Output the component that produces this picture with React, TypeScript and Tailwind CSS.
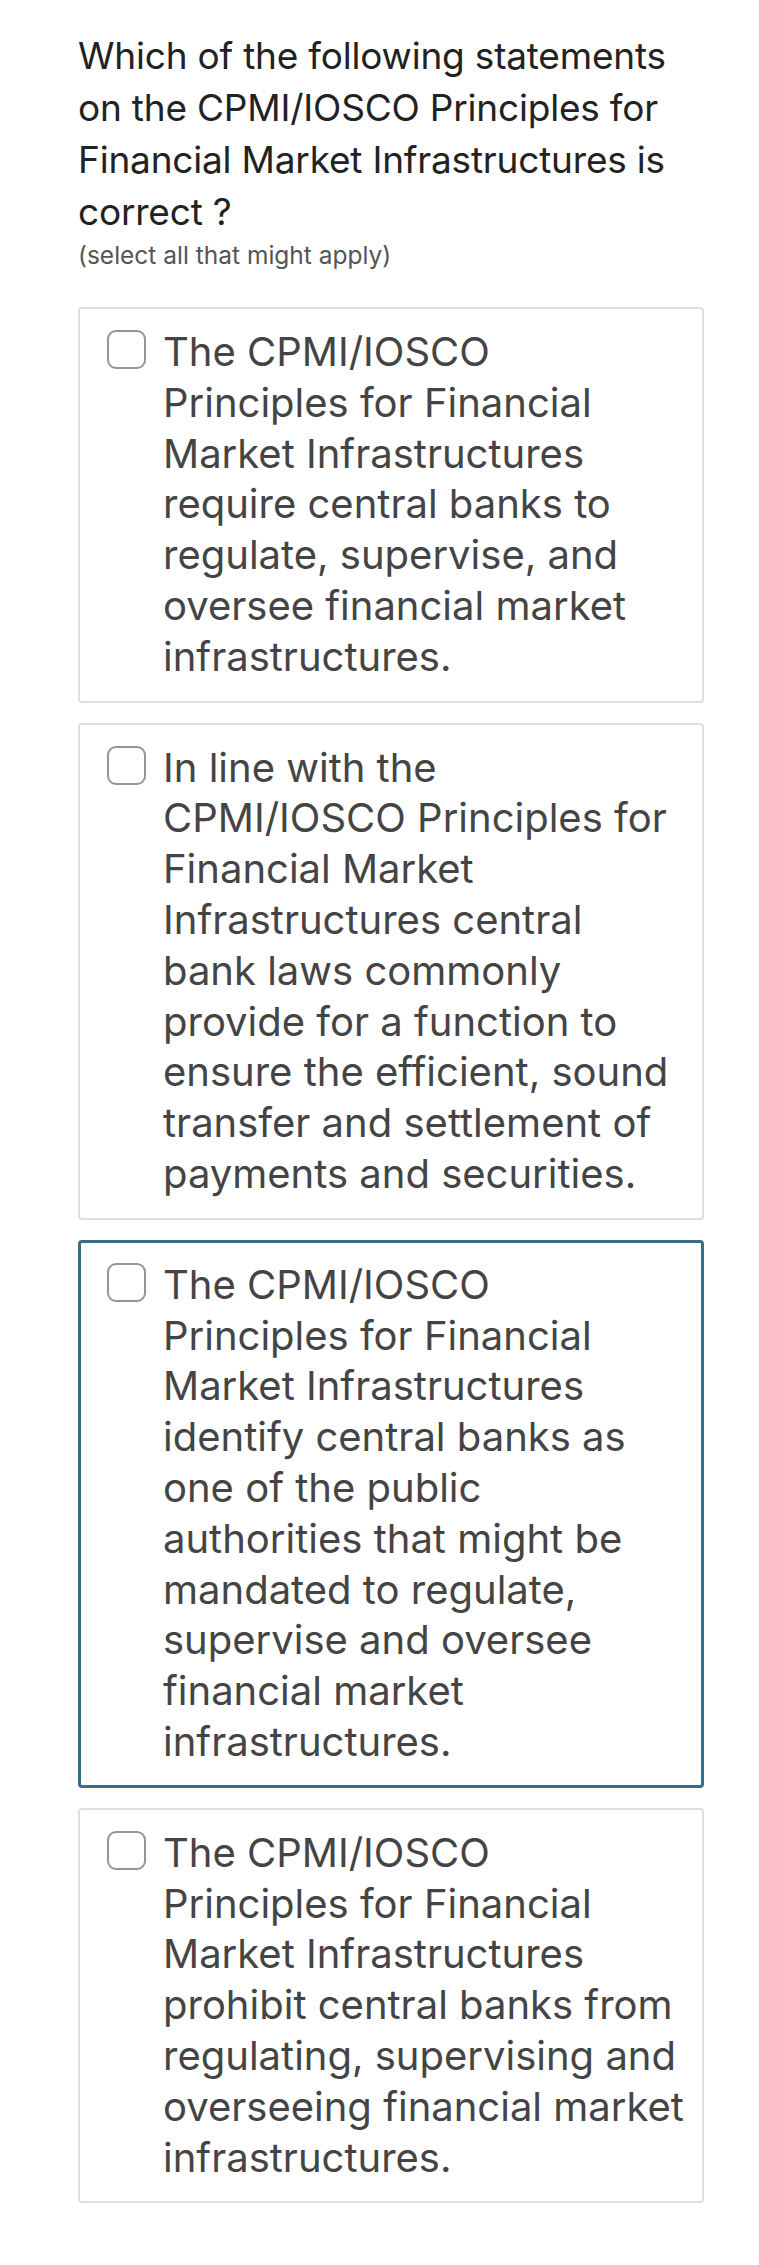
import { useState } from "react";

type Option = {
  id: string;
  text: string;
};

const options: Option[] = [
  {
    id: "a",
    text: "The CPMI/IOSCO Principles for Financial Market Infrastructures require central banks to regulate, supervise, and oversee financial market infrastructures.",
  },
  {
    id: "b",
    text: "In line with the CPMI/IOSCO Principles for Financial Market Infrastructures central bank laws commonly provide for a function to ensure the efficient, sound transfer and settlement of payments and securities.",
  },
  {
    id: "c",
    text: "The CPMI/IOSCO Principles for Financial Market Infrastructures identify central banks as one of the public authorities that might be mandated to regulate, supervise and oversee financial market infrastructures.",
  },
  {
    id: "d",
    text: "The CPMI/IOSCO Principles for Financial Market Infrastructures prohibit central banks from regulating, supervising and overseeing financial market infrastructures.",
  },
];

const App = () => {
  const [checked, setChecked] = useState<Record<string, boolean>>({});
  const focused = "c";

  return (
    <div className="min-h-screen bg-white pl-[78px] pr-[55px] pt-[30px] pb-[60px] font-['Inter','Noto_Sans',sans-serif]">
      <h1 className="text-[37px] leading-[52px] text-[#222] font-normal tracking-[-0.2px]">
        Which of the following statements on the CPMI/IOSCO Principles for Financial Market Infrastructures is correct ?
      </h1>
      <p className="text-[24.5px] leading-[30px] text-[#555] mt-[2px]">(select all that might apply)</p>

      <div className="mt-[37px] flex flex-col gap-[20px]">
        {options.map((opt) => (
          <label
            key={opt.id}
            className={
              opt.id === focused
                ? "flex items-start gap-[17px] rounded-[4px] border-[3px] border-[#3a6c8c] pl-[26px] pr-[17px] py-[17px] cursor-pointer"
                : "flex items-start gap-[17px] rounded-[4px] border-2 border-[#dedede] pl-[27px] pr-[18px] py-[18px] cursor-pointer"
            }
          >
            <input
              type="checkbox"
              checked={!!checked[opt.id]}
              onChange={() => setChecked((prev) => ({ ...prev, [opt.id]: !prev[opt.id] }))}
              className="appearance-none shrink-0 w-[39px] h-[39px] mt-[3px] rounded-[9px] border-2 border-[#959595] bg-white checked:bg-[#3a6c8c]"
            />
            <span className="text-[40px] leading-[50.8px] text-[#444]">{opt.text}</span>
          </label>
        ))}
      </div>
    </div>
  );
};

export default App;
